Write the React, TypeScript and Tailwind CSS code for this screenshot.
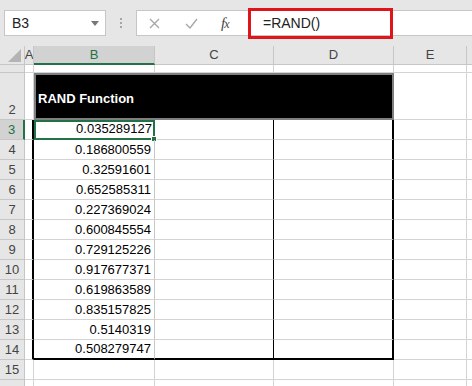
import React from 'react';

const values = [
  '0.035289127',
  '0.186800559',
  '0.32591601',
  '0.652585311',
  '0.227369024',
  '0.600845554',
  '0.729125226',
  '0.917677371',
  '0.619863589',
  '0.835157825',
  '0.5140319',
  '0.508279747',
];

const grid = 'border-r border-b border-[#d4d4d4]';

function RowHead({ n, active, h }: { n?: number; active?: boolean; h: string }) {
  return (
    <div
      className={`w-[25px] shrink-0 ${h} flex items-end justify-center overflow-hidden box-border border-b border-[#c6c6c6] text-[13px] leading-[18px] ${
        active
          ? 'bg-[#d2d2d2] text-[#217346] border-r-2 border-r-[#217346]'
          : 'bg-[#e6e6e6] text-[#444] border-r border-r-[#c6c6c6]'
      }`}
    >
      {n}
    </div>
  );
}

export default function App() {
  return (
    <div className="w-[472px] h-[386px] overflow-hidden bg-white font-['Liberation_Sans',Arial,sans-serif] text-black">
      {/* Formula bar */}
      <div className="h-[46px] bg-[#e6e6e6] flex items-start pt-[10px] pl-[4px]">
        <div className="w-[102px] h-[26px] bg-white border border-[#c6c6c6] flex items-center justify-between pl-[7px] pr-[6px]">
          <span className="text-[14px] text-[#222]">B3</span>
          <svg width="8" height="5" viewBox="0 0 8 5">
            <path d="M0 0h8L4 5z" fill="#777" />
          </svg>
        </div>
        <div className="w-[30px] h-[26px] flex flex-col items-center justify-center gap-[2px]">
          <span className="w-[2px] h-[2px] bg-[#a6a6a6]" />
          <span className="w-[2px] h-[2px] bg-[#a6a6a6]" />
          <span className="w-[2px] h-[2px] bg-[#a6a6a6]" />
        </div>
        <div className="flex-1 h-[26px] bg-white border border-[#c6c6c6] border-r-0 flex items-center">
          <div className="w-[111px] h-full flex items-center">
            <svg className="ml-[12px]" width="11" height="11" viewBox="0 0 11 11">
              <path d="M1 1l9 9M10 1l-9 9" stroke="#a8a8a8" strokeWidth="1.4" fill="none" />
            </svg>
            <svg className="ml-[25px]" width="13" height="11" viewBox="0 0 13 11">
              <path d="M1 6l4 4 7-9" stroke="#a8a8a8" strokeWidth="1.4" fill="none" />
            </svg>
            <span className="ml-[23px] font-['Liberation_Serif',serif] italic text-[15px] text-[#444] tracking-[-1px]">
              f<span className="text-[12px]">x</span>
            </span>
          </div>
          <div className="w-[145px] h-[31px] -my-[3px] border-[3px] border-[#e0141b] flex items-center pl-[12px]">
            <span className="text-[14px] text-[#222]">=RAND()</span>
          </div>
        </div>
      </div>

      {/* Column headers */}
      <div className="flex h-[19px]">
        <div className="w-[25px] shrink-0 h-full bg-[#e6e6e6] border-r border-b border-[#c6c6c6] flex items-end justify-end pr-[3px] pb-[2px]">
          <svg width="13" height="13" viewBox="0 0 13 13">
            <path d="M13 0v13H0z" fill="#b4b4b4" />
          </svg>
        </div>
        <div className="w-[9px] shrink-0 h-full bg-[#e6e6e6] border-r border-b border-[#c6c6c6] overflow-hidden flex items-center justify-center text-[13px] text-[#444]">
          A
        </div>
        <div className="w-[121px] shrink-0 h-full bg-[#d2d2d2] border-r border-r-[#c6c6c6] border-b-2 border-b-[#217346] flex items-center justify-center text-[13px] text-[#217346]">
          B
        </div>
        <div className="w-[119px] shrink-0 h-full bg-[#e6e6e6] border-r border-b border-[#c6c6c6] flex items-center justify-center text-[13px] text-[#444]">
          C
        </div>
        <div className="w-[120px] shrink-0 h-full bg-[#e6e6e6] border-r border-b border-[#c6c6c6] flex items-center justify-center text-[13px] text-[#444]">
          D
        </div>
        <div className="w-[73px] shrink-0 h-full bg-[#e6e6e6] border-r border-b border-[#c6c6c6] flex items-center justify-center text-[13px] text-[#444]">
          E
        </div>
        <div className="flex-1 h-full bg-[#e6e6e6] border-b border-[#c6c6c6]" />
      </div>

      {/* Row 1 */}
      <div className="flex h-[8px]">
        <RowHead h="h-[8px]" />
        <div className={`w-[9px] shrink-0 ${grid}`} />
        <div className={`w-[121px] shrink-0 ${grid}`} />
        <div className={`w-[119px] shrink-0 ${grid}`} />
        <div className={`w-[120px] shrink-0 ${grid}`} />
        <div className={`w-[73px] shrink-0 ${grid}`} />
        <div className="flex-1 border-b border-[#d4d4d4]" />
      </div>

      {/* Row 2 header */}
      <div className="flex h-[47px]">
        <RowHead n={2} h="h-[47px]" />
        <div className={`w-[9px] shrink-0 ${grid}`} />
        <div className="w-[360px] shrink-0 bg-black border-2 border-[#7f7f7f] flex items-center pl-[2px] pt-[4px]">
          <span className="text-white font-bold text-[13px]">RAND Function</span>
        </div>
        <div className={`w-[73px] shrink-0 ${grid}`} />
        <div className="flex-1 border-b border-[#d4d4d4]" />
      </div>

      {/* Data rows */}
      {values.map((v, i) => {
        const last = i === values.length - 1;
        const sel = i === 0;
        return (
          <div key={i} className="flex h-[20px]">
            <RowHead n={i + 3} active={sel} h="h-[20px]" />
            <div className="w-[9px] shrink-0 border-b border-[#d4d4d4] border-r-2 border-r-black" />
            <div
              className={`w-[121px] shrink-0 relative flex items-end justify-end text-[13px] leading-[18px] ${
                sel
                  ? 'border-2 border-[#217346] pr-[1px]'
                  : `border-r border-r-[#c8c8c8] pr-[3px] ${last ? 'border-b-2 border-b-black' : 'border-b border-b-[#d4d4d4]'}`
              }`}
            >
              {v}
              {sel && (
                <span className="absolute -right-[4px] -bottom-[4px] w-[6px] h-[6px] bg-[#217346] border border-white" />
              )}
            </div>
            <div
              className={`w-[119px] shrink-0 border-r border-r-black ${
                last ? 'border-b-2 border-b-black' : 'border-b border-b-[#d4d4d4]'
              }`}
            />
            <div
              className={`w-[120px] shrink-0 border-r-2 border-r-black ${
                last ? 'border-b-2 border-b-black' : 'border-b border-b-[#d4d4d4]'
              }`}
            />
            <div className={`w-[73px] shrink-0 ${grid}`} />
            <div className="flex-1 border-b border-[#d4d4d4]" />
          </div>
        );
      })}

      {/* Rows 15-16 */}
      {[15, undefined].map((n, i) => (
        <div key={i} className="flex h-[20px]">
          <RowHead n={n} h="h-[20px]" />
          <div className={`w-[9px] shrink-0 ${grid}`} />
          <div className={`w-[121px] shrink-0 ${grid}`} />
          <div className={`w-[119px] shrink-0 ${grid}`} />
          <div className={`w-[120px] shrink-0 ${grid}`} />
          <div className={`w-[73px] shrink-0 ${grid}`} />
          <div className="flex-1 border-b border-[#d4d4d4]" />
        </div>
      ))}
    </div>
  );
}
